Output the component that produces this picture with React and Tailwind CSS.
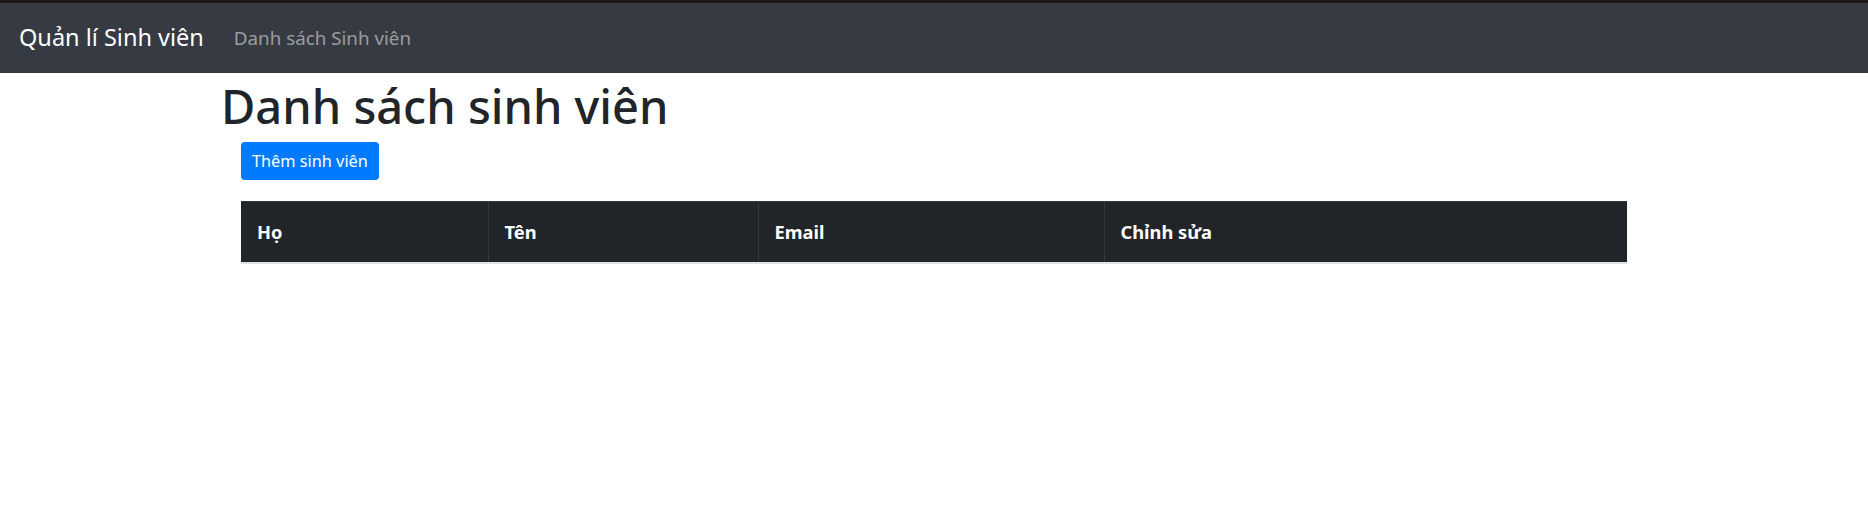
export default function App() {
  const cols = [
    { key: "ho", label: "Họ", w: "w-[247px]" },
    { key: "ten", label: "Tên", w: "w-[270px]" },
    { key: "email", label: "Email", w: "w-[346px]" },
    { key: "edit", label: "Chỉnh sửa", w: "" },
  ];

  return (
    <div className="min-h-[532px] bg-white font-['Noto_Sans',_'Open_Sans',_sans-serif] text-[#212529]">
      <nav className="h-[73px] border-t-[3px] border-[#1e1816] bg-[#363a42] flex items-center px-[19px] gap-[30px]">
        <a className="text-[23.5px] text-white">Quản lí Sinh viên</a>
        <a className="text-[18.8px] text-white/50">Danh sách Sinh viên</a>
      </nav>

      <div className="w-[1426px] mx-auto">
        <h1 className="text-[47px] font-medium leading-[1.2] mt-[5px] mb-[8px]">Danh sách sinh viên</h1>
        <div className="px-[20px]">
          <button className="h-[38px] px-[11px] rounded-[4px] bg-[#007bff] text-white text-[16.3px]">
            Thêm sinh viên
          </button>
          <table className="mt-[21px] w-full border-collapse">
            <thead>
              <tr className="bg-[#212529] text-white border-b-2 border-[#dee2e6]">
                {cols.map((c, i) => (
                  <th
                    key={c.key}
                    className={`${c.w} h-[61px] px-[16px] text-left text-[18.3px] font-bold border-t border-[#32383e] ${i > 0 ? "border-l" : ""}`}
                  >
                    {c.label}
                  </th>
                ))}
              </tr>
            </thead>
            <tbody></tbody>
          </table>
        </div>
      </div>
    </div>
  );
}
